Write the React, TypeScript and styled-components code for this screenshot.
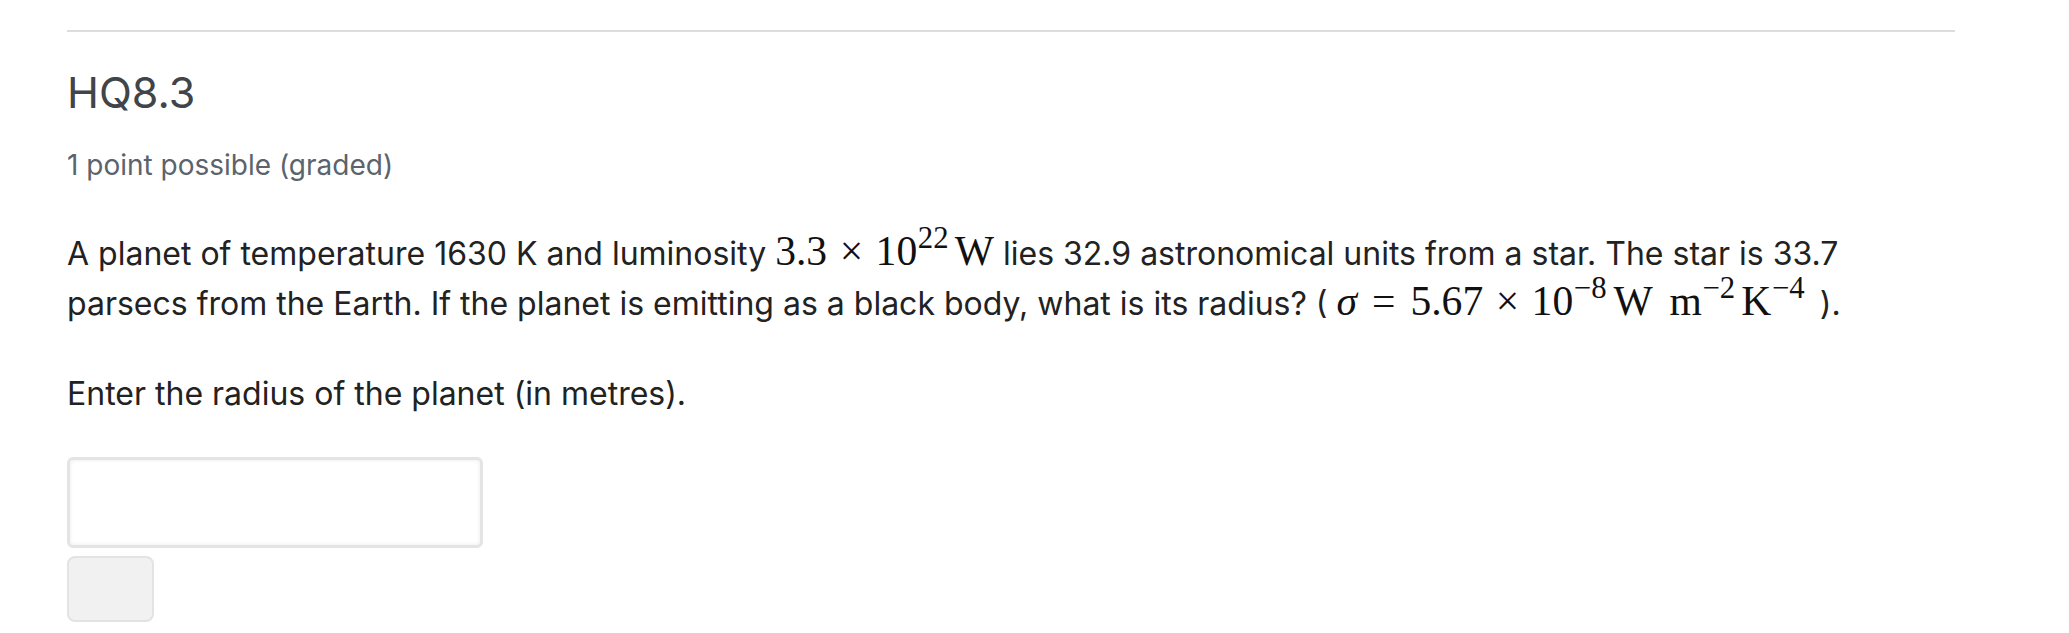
import React from 'react'
import styled, { createGlobalStyle } from 'styled-components'

const GlobalStyle = createGlobalStyle`
  html, body {
    margin: 0;
    padding: 0;
    background: #ffffff;
  }
  body {
    font-family: Inter, "Noto Sans", "Liberation Sans", sans-serif;
    color: #222222;
  }
`

const Page = styled.div`
  padding: 30px 114px 0 67px;
`

const Divider = styled.hr`
  margin: 0;
  border: 0;
  border-top: 2px solid #dddddd;
`

const Problem = styled.section`
  display: flex;
  flex-direction: column;
  align-items: flex-start;
`

const Title = styled.h3`
  margin: 34px 0 0;
  font-size: 43px;
  line-height: 52px;
  font-weight: 400;
  color: #414448;
`

const Meta = styled.div`
  margin-top: 30px;
  font-size: 28px;
  line-height: 34px;
  color: #5b636c;
`

const Text = styled.p<{ $top: number }>`
  margin: ${(p) => p.$top}px 0 0;
  font-size: 32px;
  line-height: 50px;
  color: #222222;
`

const Math = styled.span`
  font-family: "Liberation Serif", "DejaVu Serif", serif;
  font-size: 1.3em;
  line-height: 40px;
  white-space: nowrap;
  color: #111111;
`

const Op = styled.span<{ $rel?: boolean }>`
  margin: 0 ${(p) => (p.$rel ? 0.36 : 0.3)}em;
`

const Var = styled.i`
  font-style: italic;
`

const Sup = styled.sup`
  font-size: 0.74em;
  line-height: 0;
  vertical-align: 0.55em;
  margin-left: 0.02em;
  margin-right: 0.2em;
`

const Unit = styled.span<{ $gap?: number }>`
  margin-left: ${(p) => p.$gap ?? 0}em;
`

const AnswerInput = styled.input`
  margin-top: 38px;
  box-sizing: border-box;
  width: 416px;
  height: 91px;
  border: 3px solid #e3e4e6;
  border-radius: 6px;
  box-shadow: inset 0 0 4px rgba(0, 0, 0, 0.08);
  background: #ffffff;
  font-family: inherit;
  font-size: 26px;
  padding: 0 12px;
  outline: none;
`

const SubmitButton = styled.button`
  margin-top: 8px;
  box-sizing: border-box;
  width: 87px;
  height: 66px;
  background: #f1f1f1;
  border: 2px solid #e3e3e3;
  border-radius: 8px;
  padding: 0;
  cursor: pointer;
`

export default function App() {
  return (
    <>
      <GlobalStyle />
      <Page>
        <Divider />
        <Problem>
          <Title>HQ8.3</Title>
          <Meta>1 point possible (graded)</Meta>
          <Text $top={47}>
            A planet of temperature 1630 K and luminosity{' '}
            <Math>
              3.3<Op>×</Op>10<Sup>22</Sup>
              <Unit>W</Unit>
            </Math>{' '}
            lies 32.9 astronomical units from a star. The star is 33.7 parsecs from the Earth. If the
            planet is emitting as a black body, what is its radius? ({' '}
            <Math>
              <Var>σ</Var>
              <Op $rel>=</Op>5.67<Op>×</Op>10<Sup>−8</Sup>
              <Unit $gap={0.02}>W</Unit>
              <Unit $gap={0.4}>m</Unit>
              <Sup>−2</Sup>K<Sup>−4</Sup>
            </Math>{' '}
            ).
          </Text>
          <Text $top={40}>Enter the radius of the planet (in metres).</Text>
          <AnswerInput type="text" aria-label="Answer" />
          <SubmitButton type="button" aria-label="Submit" />
        </Problem>
      </Page>
    </>
  )
}
